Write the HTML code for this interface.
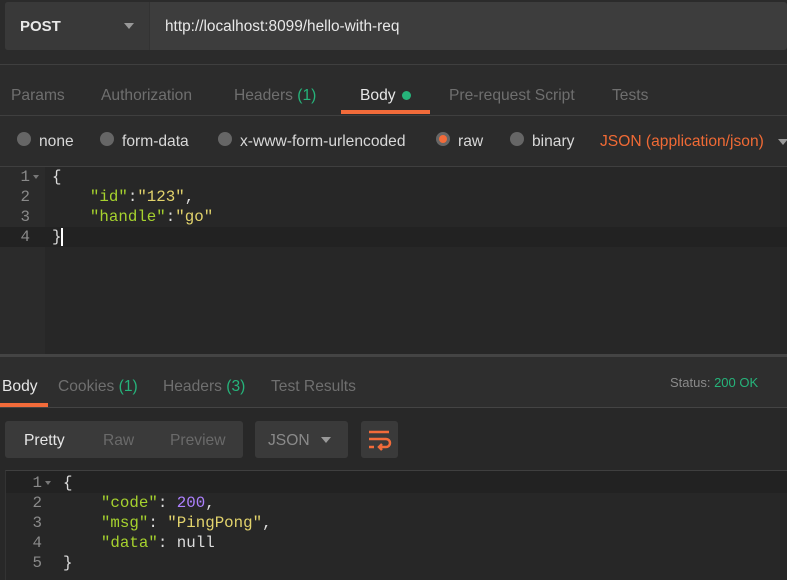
<!DOCTYPE html>
<html><head><meta charset="utf-8"><style>
*{margin:0;padding:0;box-sizing:border-box}
body{width:787px;height:580px;overflow:hidden;background:#282828;font-family:"Liberation Sans",sans-serif;position:relative;color:#ccc}
.a{position:absolute}
.code{font-family:"Liberation Mono",monospace;font-size:15.8px;line-height:20px;white-space:pre;color:#ddd}
.k{color:#a6d22e}.s{color:#e2d36c}.n{color:#ae81ff}
.ln{color:#8a8a8a;text-align:right;font-family:"Liberation Mono",monospace;font-size:15.8px;line-height:20px}
.tab{position:absolute;font-size:15.6px;color:#6f6f6f;top:87px}
.g{color:#26b37a}
.rd{position:absolute;width:14px;height:14px;border-radius:50%;background:#666;top:132px}
.rl{position:absolute;top:133px;font-size:15.6px;color:#d8d8d8}
</style></head><body>
<div class="a" style="left:0;top:0;width:787px;height:64px;background:#2b2b2b"></div>
<div class="a" style="left:5px;top:2px;width:782px;height:48px;background:#3d3d3d;border-radius:3px"></div>
<div class="a" style="left:5px;top:2px;width:145px;height:48px;background:#393939;border-radius:3px 0 0 3px;border-right:1px solid #333"></div>
<div class="a" style="left:20px;top:18px;font-size:15px;font-weight:bold;color:#e8e8e8">POST</div>
<div class="a" style="left:124px;top:23px;border-left:5px solid transparent;border-right:5px solid transparent;border-top:6px solid #999"></div>
<div class="a" style="left:165px;top:18px;font-size:15.4px;color:#e8e8e8">http://localhost:8099/hello-with-req</div>
<div class="a" style="left:0;top:64px;width:787px;height:1px;background:#3f3f3f"></div>
<div class="a" style="left:0;top:65px;width:787px;height:50px;background:#2c2c2c"></div>
<div class="tab" style="left:11px">Params</div>
<div class="tab" style="left:101px">Authorization</div>
<div class="tab" style="left:234px">Headers <span class="g">(1)</span></div>
<div class="tab" style="left:360px;color:#e6e6e6">Body</div>
<div class="a" style="left:402px;top:91px;width:9px;height:9px;border-radius:50%;background:#26b37a"></div>
<div class="tab" style="left:449px">Pre-request Script</div>
<div class="tab" style="left:612px">Tests</div>
<div class="a" style="left:341px;top:110px;width:89px;height:4px;background:#f26b3a"></div>
<div class="a" style="left:0;top:115px;width:787px;height:1px;background:#3f3f3f"></div>
<div class="a" style="left:0;top:116px;width:787px;height:50px;background:#2c2c2c"></div>
<div class="rd" style="left:17px"></div><div class="rl" style="left:39px">none</div>
<div class="rd" style="left:100px"></div><div class="rl" style="left:122px">form-data</div>
<div class="rd" style="left:218px"></div><div class="rl" style="left:240px">x-www-form-urlencoded</div>
<div class="rd" style="left:436px;background:#666;border:3px solid #666"><div style="width:8px;height:8px;border-radius:50%;background:#f26b3a"></div></div><div class="rl" style="left:458px">raw</div>
<div class="rd" style="left:510px"></div><div class="rl" style="left:532px">binary</div>
<div class="rl" style="left:600px;color:#f06a35">JSON (application/json)</div>
<div class="a" style="left:778px;top:139px;border-left:5px solid transparent;border-right:5px solid transparent;border-top:6px solid #999"></div>
<div class="a" style="left:0;top:166px;width:787px;height:1px;background:#3f3f3f"></div>
<div class="a" style="left:0;top:167px;width:787px;height:187px;background:#272727"></div>
<div class="a" style="left:0;top:167px;width:45px;height:187px;background:#2b2b2b"></div>
<div class="a" style="left:0;top:227px;width:787px;height:20px;background:#222"></div>
<div class="a ln" style="left:0;top:167px;width:30px">1<br>2<br>3<br>4</div>
<div class="a" style="left:33px;top:175px;border-left:3px solid transparent;border-right:3px solid transparent;border-top:4px solid #777"></div>
<div class="a code" style="left:52px;top:167px">{
    <span class="k">"id"</span>:<span class="s">"123"</span>,
    <span class="k">"handle"</span>:<span class="s">"go"</span>
}</div>
<div class="a" style="left:61px;top:228px;width:2px;height:18px;background:#fff"></div>
<div class="a" style="left:0;top:354px;width:787px;height:3px;background:#444"></div>
<div class="a" style="left:0;top:357px;width:787px;height:50px;background:#2e2e2e"></div>
<div class="a" style="left:2px;top:378px;font-size:15.6px;color:#e6e6e6">Body</div>
<div class="a" style="left:58px;top:378px;font-size:15.6px;color:#6f6f6f">Cookies <span class="g">(1)</span></div>
<div class="a" style="left:163px;top:378px;font-size:15.6px;color:#6f6f6f">Headers <span class="g">(3)</span></div>
<div class="a" style="left:271px;top:378px;font-size:15.6px;color:#6f6f6f">Test Results</div>
<div class="a" style="left:670px;top:375px;font-size:13px;color:#8a8a8a">Status: <span class="g">200 OK</span></div>
<div class="a" style="left:0;top:403px;width:48px;height:4px;background:#f26b3a"></div>
<div class="a" style="left:0;top:407px;width:787px;height:1px;background:#444"></div>
<div class="a" style="left:5px;top:421px;width:238px;height:37px;background:#3a3a3a;border-radius:3px"></div>
<div class="a" style="left:24px;top:432px;font-size:15.6px;color:#e6e6e6">Pretty</div>
<div class="a" style="left:103px;top:432px;font-size:15.6px;color:#6a6a6a">Raw</div>
<div class="a" style="left:170px;top:432px;font-size:15.6px;color:#6a6a6a">Preview</div>
<div class="a" style="left:255px;top:421px;width:93px;height:37px;background:#3a3a3a;border-radius:3px"></div>
<div class="a" style="left:268px;top:432px;font-size:15.6px;color:#8a8a8a">JSON</div>
<div class="a" style="left:321px;top:437px;border-left:5px solid transparent;border-right:5px solid transparent;border-top:6px solid #999"></div>
<div class="a" style="left:361px;top:421px;width:37px;height:37px;background:#3a3a3a;border-radius:3px"></div>
<svg class="a" style="left:361px;top:421px" width="37" height="37"><g stroke="#f26b3a" stroke-width="2.5" fill="none"><path d="M8 11h20"/><path d="M8 18h17a4 4 0 0 1 0 8h-7"/><path d="M21 23l-3 3 3 3"/><path d="M8 26h5"/></g></svg>
<div class="a" style="left:5px;top:470px;width:782px;height:110px;background:#272727;border-top:1px solid #3f3f3f;border-left:1px solid #333"></div>
<div class="a" style="left:6px;top:471px;width:781px;height:22px;background:#222"></div>
<div class="a ln" style="left:6px;top:473px;width:36px">1<br>2<br>3<br>4<br>5</div>
<div class="a" style="left:45px;top:481px;border-left:3px solid transparent;border-right:3px solid transparent;border-top:4px solid #777"></div>
<div class="a code" style="left:63px;top:473px">{
    <span class="k">"code"</span>: <span class="n">200</span>,
    <span class="k">"msg"</span>: <span class="s">"PingPong"</span>,
    <span class="k">"data"</span>: null
}</div>
</body></html>
